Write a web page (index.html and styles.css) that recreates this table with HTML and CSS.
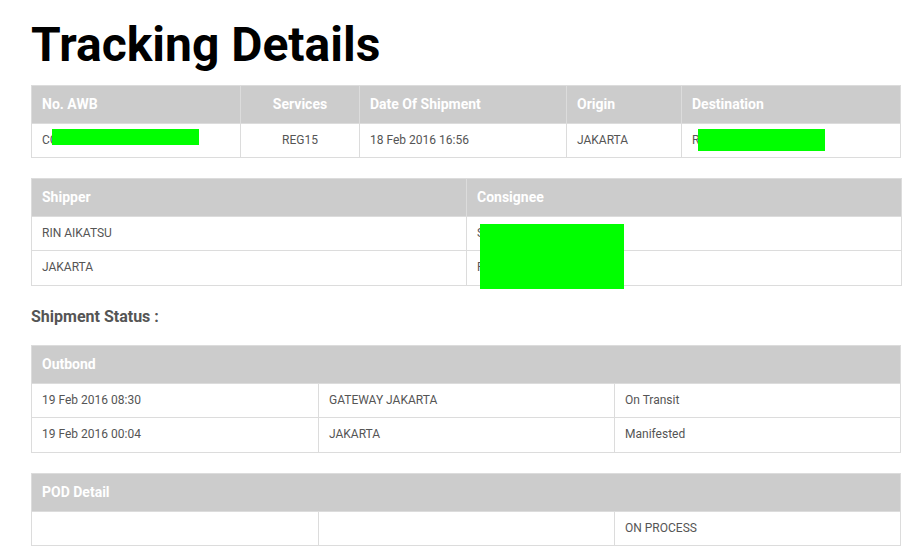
FILE: index.html
```html
<!DOCTYPE html>
<html>
<head>
<meta charset="utf-8">
<link rel="stylesheet" href="styles.css">
</head>
<body>
<div class="page">
  <h1 class="title">Tracking Details</h1>

  <table class="grid t1">
    <colgroup>
      <col class="c1a"><col class="c1b"><col class="c1c"><col class="c1d"><col class="c1e">
    </colgroup>
    <thead>
      <tr><th>No. AWB</th><th class="center">Services</th><th>Date Of Shipment</th><th>Origin</th><th>Destination</th></tr>
    </thead>
    <tbody>
      <tr><td>CGK1234567</td><td class="center">REG15</td><td>18 Feb 2016 16:56</td><td>JAKARTA</td><td>RXXXXXXXXX</td></tr>
    </tbody>
  </table>

  <table class="grid t2">
    <colgroup><col class="half"><col class="half"></colgroup>
    <thead>
      <tr><th>Shipper</th><th>Consignee</th></tr>
    </thead>
    <tbody>
      <tr><td>RIN AIKATSU</td><td>SXXXXXXXX</td></tr>
      <tr><td>JAKARTA</td><td>FXXXXXXXX</td></tr>
    </tbody>
  </table>

  <h3 class="status">Shipment Status :</h3>

  <table class="grid t3">
    <colgroup><col class="c3a"><col class="c3b"><col class="c3c"></colgroup>
    <thead>
      <tr><th colspan="3">Outbond</th></tr>
    </thead>
    <tbody>
      <tr><td>19 Feb 2016 08:30</td><td>GATEWAY JAKARTA</td><td>On Transit</td></tr>
      <tr><td>19 Feb 2016 00:04</td><td>JAKARTA</td><td>Manifested</td></tr>
    </tbody>
  </table>

  <table class="grid t4">
    <colgroup><col class="c3a"><col class="c3b"><col class="c3c"></colgroup>
    <thead>
      <tr><th colspan="3">POD Detail</th></tr>
    </thead>
    <tbody>
      <tr><td></td><td></td><td>ON PROCESS</td></tr>
    </tbody>
  </table>

  <div class="redact r1"></div>
  <div class="redact r2"></div>
  <div class="redact r3"></div>
</div>
</body>
</html>
```

FILE: styles.css
```css
html, body {
  margin: 0;
  padding: 0;
  background: #fff;
}

.page {
  position: relative;
  padding: 0 12px 0 31px;
  font-family: Roboto, "Liberation Sans", sans-serif;
  color: #555;
}

.title {
  margin: 0;
  padding-top: 16px;
  font-family: Roboto, "Liberation Sans", sans-serif;
  font-weight: 700;
  font-size: 48px;
  line-height: 58px;
  color: #000;
  height: 69px;
}

.grid {
  width: 869px;
  border-collapse: collapse;
  table-layout: fixed;
  margin-bottom: 20px;
}

.grid th, .grid td {
  border: 1px solid #dcdcdc;
  text-align: left;
  font-size: 12px;
  line-height: 16px;
}

.grid th {
  background: #cccccc;
  color: #fff;
  font-weight: 700;
  font-size: 14px;
  padding: 10px 10px 11px;
}

.grid td {
  padding: 8px 10px 9px;
  color: #555;
  height: 16px;
}

.grid tr + tr td {
  padding-bottom: 10px;
}

.grid .center {
  text-align: center;
}

.c1a { width: 209px; }
.c1b { width: 119px; }
.c1c { width: 207px; }
.c1d { width: 115px; }
.c1e { width: 219px; }

.half { width: 435px; }

.c3a { width: 287px; }
.c3b { width: 296px; }
.c3c { width: 286px; }

.status {
  margin: 0;
  padding: 1px 0 0;
  height: 38px;
  font-size: 16px;
  line-height: 20px;
  font-weight: 700;
  color: #555;
}

.redact {
  position: absolute;
  background: #00ff00;
}

.r1 { left: 52px; top: 129px; width: 147px; height: 16px; }
.r2 { left: 698px; top: 129px; width: 127px; height: 22px; }
.r3 { left: 480px; top: 224px; width: 144px; height: 65px; }
```
